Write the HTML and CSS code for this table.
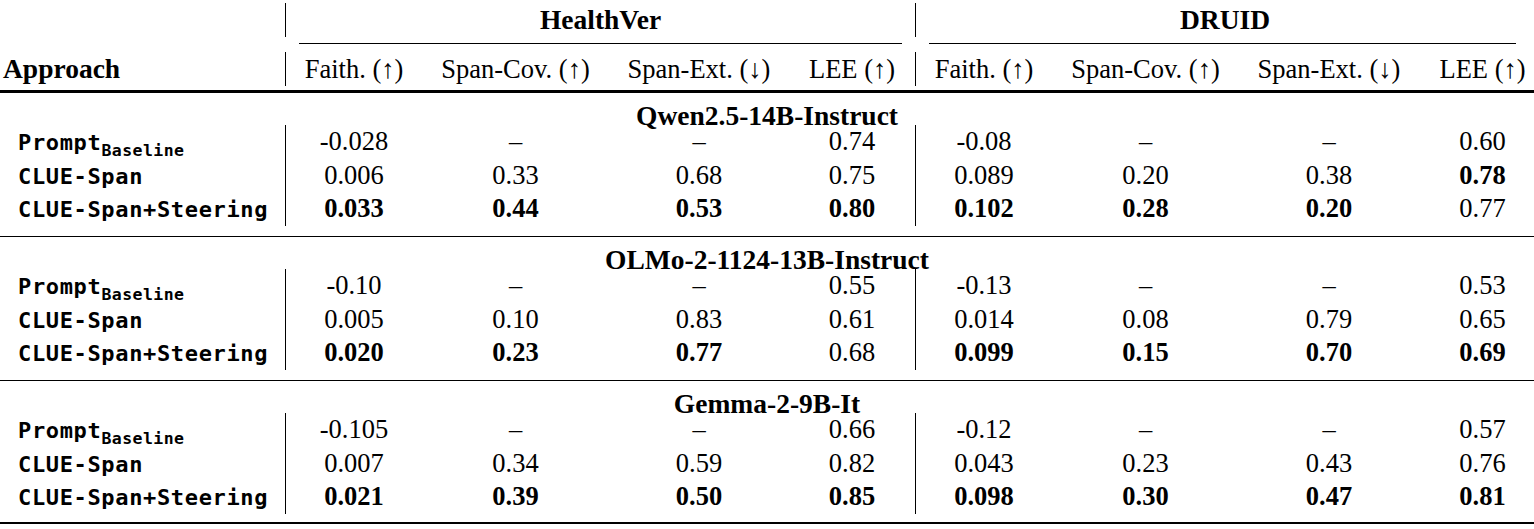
FILE: index.html
```html
<!DOCTYPE html>
<html lang="en">
<head>
<meta charset="utf-8">
<title>Results table</title>
<link rel="stylesheet" href="styles.css">
</head>
<body>
<table class="results">
  <colgroup>
    <col class="c-app">
    <col class="c-faith"><col class="c-cov"><col class="c-ext"><col class="c-lee">
    <col class="c-faith"><col class="c-cov"><col class="c-ext"><col class="c-lee-last">
  </colgroup>
  <tbody>
    <tr class="hdr">
      <td class="app"></td>
      <td colspan="4" class="ds vl">HealthVer</td>
      <td colspan="4" class="ds vl">DRUID</td>
    </tr>
    <tr class="cmid">
      <td></td>
      <td colspan="4"><div class="cline cline-h"></div></td>
      <td colspan="4"><div class="cline cline-d"></div></td>
    </tr>
    <tr class="hdr">
      <td class="app-head">Approach</td>
      <td class="vl">Faith. (↑)</td><td>Span-Cov. (↑)</td><td>Span-Ext. (↓)</td><td>LEE (↑)</td>
      <td class="vl">Faith. (↑)</td><td>Span-Cov. (↑)</td><td>Span-Ext. (↓)</td><td class="last">LEE (↑)</td>
    </tr>
    <tr class="gap gap-head"><td colspan="9"></td></tr>
    <tr class="rule thick"><td colspan="9"></td></tr>

    <tr class="title"><td colspan="9"><div class="title-text">Qwen2.5-14B-Instruct</div></td></tr>
    <tr class="row">
      <td class="name">Prompt<span class="sub">Baseline</span></td>
      <td class="vl">-0.028</td><td>–</td><td>–</td><td>0.74</td>
      <td class="vl">-0.08</td><td>–</td><td>–</td><td class="last">0.60</td>
    </tr>
    <tr class="row">
      <td class="name">CLUE-Span</td>
      <td class="vl">0.006</td><td>0.33</td><td>0.68</td><td>0.75</td>
      <td class="vl">0.089</td><td>0.20</td><td>0.38</td><td class="last b">0.78</td>
    </tr>
    <tr class="row">
      <td class="name">CLUE-Span+Steering</td>
      <td class="vl b">0.033</td><td class="b">0.44</td><td class="b">0.53</td><td class="b">0.80</td>
      <td class="vl b">0.102</td><td class="b">0.28</td><td class="b">0.20</td><td class="last">0.77</td>
    </tr>
    <tr class="gap gap-mid"><td colspan="9"></td></tr>
    <tr class="rule"><td colspan="9"></td></tr>

    <tr class="title"><td colspan="9"><div class="title-text">OLMo-2-1124-13B-Instruct</div></td></tr>
    <tr class="row">
      <td class="name">Prompt<span class="sub">Baseline</span></td>
      <td class="vl">-0.10</td><td>–</td><td>–</td><td>0.55</td>
      <td class="vl">-0.13</td><td>–</td><td>–</td><td class="last">0.53</td>
    </tr>
    <tr class="row">
      <td class="name">CLUE-Span</td>
      <td class="vl">0.005</td><td>0.10</td><td>0.83</td><td>0.61</td>
      <td class="vl">0.014</td><td>0.08</td><td>0.79</td><td class="last">0.65</td>
    </tr>
    <tr class="row">
      <td class="name">CLUE-Span+Steering</td>
      <td class="vl b">0.020</td><td class="b">0.23</td><td class="b">0.77</td><td>0.68</td>
      <td class="vl b">0.099</td><td class="b">0.15</td><td class="b">0.70</td><td class="last b">0.69</td>
    </tr>
    <tr class="gap gap-mid"><td colspan="9"></td></tr>
    <tr class="rule"><td colspan="9"></td></tr>

    <tr class="title"><td colspan="9"><div class="title-text">Gemma-2-9B-It</div></td></tr>
    <tr class="row">
      <td class="name">Prompt<span class="sub">Baseline</span></td>
      <td class="vl">-0.105</td><td>–</td><td>–</td><td>0.66</td>
      <td class="vl">-0.12</td><td>–</td><td>–</td><td class="last">0.57</td>
    </tr>
    <tr class="row">
      <td class="name">CLUE-Span</td>
      <td class="vl">0.007</td><td>0.34</td><td>0.59</td><td>0.82</td>
      <td class="vl">0.043</td><td>0.23</td><td>0.43</td><td class="last">0.76</td>
    </tr>
    <tr class="row">
      <td class="name">CLUE-Span+Steering</td>
      <td class="vl b">0.021</td><td class="b">0.39</td><td class="b">0.50</td><td class="b">0.85</td>
      <td class="vl b">0.098</td><td class="b">0.30</td><td class="b">0.47</td><td class="last b">0.81</td>
    </tr>
    <tr class="gap gap-end"><td colspan="9"></td></tr>
    <tr class="rule thick"><td colspan="9"></td></tr>
  </tbody>
</table>
</body>
</html>
```

FILE: styles.css
```css
html, body {
  margin: 0;
  padding: 0;
  background: #ffffff;
}

.results {
  margin-top: 3px;
  width: 1534px;
  table-layout: fixed;
  border-collapse: separate;
  border-spacing: 0;
  font-family: "Liberation Serif", "DejaVu Serif", serif;
  font-size: 26.5px;
  color: #000;
}

.c-app { width: 285px; }
.c-faith { width: 137px; }
.c-cov { width: 187px; }
.c-ext { width: 180px; }
.c-lee { width: 126px; }
.c-lee-last { width: 115px; }

.results td {
  box-sizing: border-box;
  padding: 0;
  text-align: center;
  white-space: nowrap;
  vertical-align: baseline;
}

.results td.vl {
  border-left: 1px solid #000;
}

.results td.last {
  padding-left: 12px;
}

/* header rows */
.hdr td {
  line-height: 34px;
}

.hdr td.ds {
  font-weight: bold;
  font-size: 27.5px;
}

.hdr td.app-head {
  text-align: left;
  padding-left: 3px;
  font-weight: bold;
  font-size: 27.5px;
}

/* cmidrules */
.cmid td {
  height: 15px;
  line-height: 0;
  font-size: 0;
  vertical-align: top;
}

.cline {
  height: 1px;
  margin-top: 6px;
  background: #000;
}

.cline-h {
  margin-left: 14px;
  margin-right: 13px;
}

.cline-d {
  margin-left: 14px;
  margin-right: 18px;
}

/* spacing and rules */
.gap td,
.rule td {
  line-height: 0;
  font-size: 0;
}

.gap-head td { height: 4px; }
.gap-mid td { height: 10px; }
.gap-end td { height: 8px; }

.rule td {
  height: 1px;
  background: #000;
}

.rule.thick td {
  height: 2.5px;
}

/* group titles */
.title td {
  font-weight: bold;
  font-size: 27.5px;
}

.title-text {
  box-sizing: border-box;
  height: 32.5px;
  padding-top: 15.5px;
  line-height: 16px;
  text-align: center;
}

/* data rows */
.row td {
  line-height: 33.5px;
}

.row td.b {
  font-weight: bold;
}

.row td.name {
  text-align: left;
  padding-left: 18px;
  font-family: "DejaVu Sans Mono", "Liberation Mono", monospace;
  font-weight: bold;
  font-size: 22px;
  letter-spacing: 0.65px;
  line-height: 28px;
}

.sub {
  font-size: 16.5px;
  letter-spacing: 0.45px;
  line-height: 0;
  vertical-align: -6px;
}
```
